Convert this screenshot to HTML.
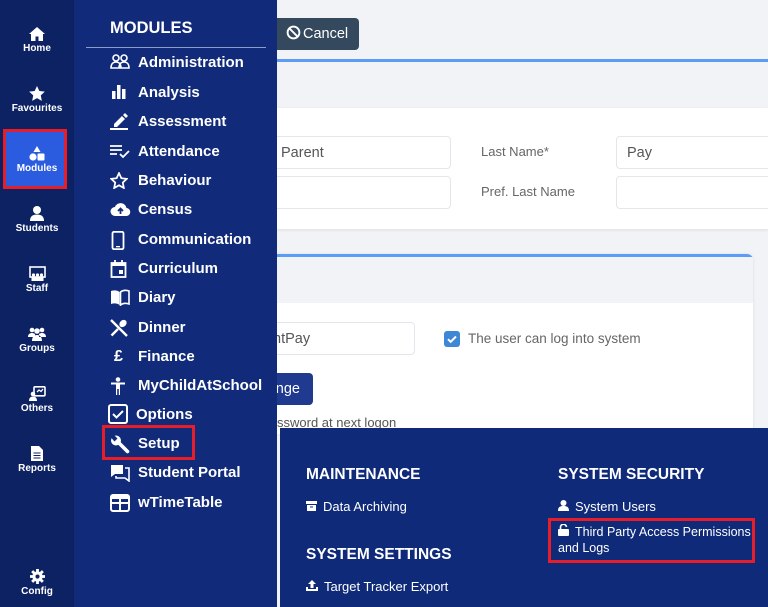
<!DOCTYPE html>
<html><head><meta charset="utf-8"><style>
*{margin:0;padding:0;box-sizing:border-box}
body{width:768px;height:607px;overflow:hidden;position:relative;background:#f1f3f7;font-family:"Liberation Sans",sans-serif}
.a{position:absolute}
.rail{left:0;top:0;width:74px;height:607px;background:#0d2263}
.ri{position:absolute;left:0;width:74px;text-align:center;color:#fff;font-size:10px;font-weight:bold}
.ri svg{display:block;margin:0 auto 2px}
.mod{left:74px;top:0;width:203px;height:607px;background:#112b7a}
.mi{position:absolute;left:64px;color:#fff;font-size:15px;font-weight:bold;height:20px;line-height:20px;white-space:nowrap}
.mi svg{position:absolute;left:-28px;top:1px}
.in{position:absolute;background:#fff;border:1px solid #e3e6ea;border-radius:4px;font-size:14.5px;color:#555;padding-left:10px;line-height:32px}
.lb{position:absolute;font-size:13px;color:#666}
.sub{left:280px;top:428px;width:488px;height:179px;background:#102a7a;color:#fff}
.h{position:absolute;font-size:15.5px;font-weight:bold}
.l{position:absolute;font-size:13px;white-space:nowrap}
</style></head><body>
<div class="a" style="left:277px;top:18px;width:82px;height:32px;background:#34495e;border-radius:0 4px 4px 0;color:#fff;font-size:14.5px;line-height:32px;padding-left:9px"><svg width="15" height="15" viewBox="0 0 16 16" style="vertical-align:-2px;margin-right:2px"><circle cx="8" cy="8" r="6.3" fill="none" stroke="#fff" stroke-width="2"/><path d="M3.7 3.7L12.3 12.3" stroke="#fff" stroke-width="2"/></svg>Cancel</div>
<div class="a" style="left:277px;top:59px;width:491px;height:3px;background:#5b9cf5"></div>
<div class="a" style="left:277px;top:108px;width:491px;height:121px;background:#fff;box-shadow:0 1px 3px #ddd"></div>
<div class="in" style="left:270px;top:136px;width:181px;height:33px">Parent</div>
<div class="in" style="left:270px;top:176px;width:181px;height:33px"></div>
<div class="lb" style="left:481px;top:144px">Last Name*</div>
<div class="lb" style="left:481px;top:184px">Pref. Last Name</div>
<div class="in" style="left:616px;top:136px;width:160px;height:33px">Pay</div>
<div class="in" style="left:616px;top:176px;width:160px;height:33px"></div>
<div class="a" style="left:277px;top:254px;width:476px;height:180px;background:#fff;border-radius:0 6px 0 0;border-top:3px solid #5b9cf5;box-shadow:0 0 3px #ddd"></div>
<div class="a" style="left:277px;top:257px;width:476px;height:46px;background:#f1f3f7"></div>
<div class="in" style="left:262px;top:322px;width:153px;height:33px">ntPay</div>
<div class="a" style="left:444px;top:331px;width:16px;height:16px;background:#3d87d6;border-radius:3px"><svg width="16" height="16" viewBox="0 0 16 16"><path d="M4 8.2l2.7 2.6L12 5.5" fill="none" stroke="#fff" stroke-width="2"/></svg></div>
<div class="lb" style="left:468px;top:331px;font-size:13.5px">The user can log into system</div>
<div class="a" style="left:270px;top:373px;width:43px;height:32px;background:#1f3a8f;border-radius:4px;color:#fff;font-size:14.5px;line-height:32px;text-align:right;padding-right:13px">nge</div>
<div class="lb" style="left:277px;top:415px;color:#555">ssword at next logon</div>

<div class="a rail">
<div class="ri" style="top:27px"><svg width="16" height="14" viewBox="0 0 16 14"><path d="M8 0L0 7h2v7h4.5V9.5h3V14H14V7h2z" fill="#fff"/></svg>Home</div>
<div class="ri" style="top:86px"><svg width="16" height="15" viewBox="0 0 24 23"><path d="M12 0l3.6 7.6 8.4 1-6.2 5.8 1.6 8.4L12 18.6 4.6 22.8l1.6-8.4L0 8.6l8.4-1z" fill="#fff"/></svg>Favourites</div>
<div class="a" style="left:3px;top:129px;width:64px;height:60px;border:3px solid #e61e2a;background:#2b5ce0"></div>
<div class="ri" style="top:146px"><svg width="16" height="15" viewBox="0 0 16 15"><path d="M8 0l3.5 6h-7z" fill="#fff"/><circle cx="4" cy="11" r="3.6" fill="#fff"/><rect x="8.5" y="7.5" width="7" height="7" rx="1" fill="#fff"/></svg>Modules</div>
<div class="ri" style="top:206px"><svg width="14" height="15" viewBox="0 0 14 15"><circle cx="7" cy="4" r="4" fill="#fff"/><path d="M0 15c0-5 3-6.5 7-6.5s7 1.5 7 6.5z" fill="#fff"/></svg>Students</div>
<div class="ri" style="top:266px"><svg width="17" height="15" viewBox="0 0 17 15"><rect x="1" y="1" width="15" height="10" fill="none" stroke="#fff" stroke-width="1.6"/><circle cx="4.5" cy="9" r="1.6" fill="#fff"/><circle cx="8.5" cy="9" r="1.6" fill="#fff"/><circle cx="12.5" cy="9" r="1.6" fill="#fff"/><rect x="2.5" y="11" width="4" height="4" fill="#fff"/><rect x="6.5" y="11" width="4" height="4" fill="#fff"/><rect x="10.5" y="11" width="4" height="4" fill="#fff"/></svg>Staff</div>
<div class="ri" style="top:326px"><svg width="18" height="15" viewBox="0 0 18 15"><circle cx="4" cy="4" r="2.3" fill="#fff"/><circle cx="14" cy="4" r="2.3" fill="#fff"/><circle cx="9" cy="5" r="2.8" fill="#fff"/><path d="M0 11c0-3 2-4 4-4s3 1 3 1v3zM18 11c0-3-2-4-4-4s-3 1-3 1v3zM4 15c0-4 2-6 5-6s5 2 5 6z" fill="#fff"/></svg>Groups</div>
<div class="ri" style="top:386px"><svg width="17" height="15" viewBox="0 0 17 15"><rect x="5" y="0.8" width="11" height="9" rx="1" fill="none" stroke="#fff" stroke-width="1.6"/><path d="M8 6l2-2 2 1.5 2-2.5" stroke="#fff" stroke-width="1.3" fill="none"/><circle cx="4" cy="8" r="2.3" fill="#fff"/><path d="M0 15c0-3 1.5-4.5 4-4.5s4 1.5 4 4.5z" fill="#fff"/></svg>Others</div>
<div class="ri" style="top:446px"><svg width="12" height="15" viewBox="0 0 12 15"><path d="M0 0h8l4 4v11H0z" fill="#fff"/><path d="M2.5 7h7M2.5 9.5h7M2.5 12h7" stroke="#0d2263" stroke-width="1"/></svg>Reports</div>
<div class="ri" style="top:569px"><svg width="15" height="15" viewBox="0 0 16 16"><circle cx="8" cy="8" r="5.5" fill="#fff"/><g stroke="#fff" stroke-width="3"><path d="M8 0v16M0 8h16M2.3 2.3l11.4 11.4M13.7 2.3L2.3 13.7"/></g><circle cx="8" cy="8" r="2.2" fill="#0d2263"/></svg>Config</div>
</div>

<div class="a mod">
<div class="a" style="left:36px;top:19px;color:#fff;font-size:16.5px;font-weight:bold">MODULES</div>
<div class="a" style="left:12px;top:47px;width:180px;height:1px;background:#8a9cc8"></div>
<div class="mi" style="top:53px"><svg width="20" height="16" viewBox="0 0 20 16"><circle cx="6" cy="4" r="3" fill="none" stroke="#fff" stroke-width="1.6"/><circle cx="14" cy="4" r="3" fill="none" stroke="#fff" stroke-width="1.6"/><path d="M1 14c0-4 2-6 5-6s5 2 5 6zM9 14c0-4 2-6 5-6s5 2 5 6z" fill="none" stroke="#fff" stroke-width="1.6"/></svg>Administration</div>
<div class="mi" style="top:83px"><svg width="18" height="16" viewBox="0 0 18 16"><rect x="2" y="7" width="3.5" height="8" fill="#fff"/><rect x="7" y="1" width="3.5" height="14" fill="#fff"/><rect x="12" y="5" width="3.5" height="10" fill="#fff"/></svg>Analysis</div>
<div class="mi" style="top:112px"><svg width="20" height="17" viewBox="0 0 20 17"><path d="M4 11L12 3l3 3-8 8H4z" fill="#fff"/><path d="M13 2l2-2 3 3-2 2z" fill="#fff"/><rect x="0" y="15" width="18" height="2" fill="#fff"/></svg>Assessment</div>
<div class="mi" style="top:142px"><svg width="20" height="16" viewBox="0 0 20 16"><path d="M0 3h12M0 7h12M0 11h7" stroke="#fff" stroke-width="1.8"/><path d="M10 11l3 3 6-6" fill="none" stroke="#fff" stroke-width="1.8"/></svg>Attendance</div>
<div class="mi" style="top:171px"><svg width="18" height="17" viewBox="0 0 24 23"><path d="M12 1.5l3.2 6.9 7.3.9-5.4 5 1.4 7.3L12 18l-6.5 3.6 1.4-7.3-5.4-5 7.3-.9z" fill="none" stroke="#fff" stroke-width="2.4"/></svg>Behaviour</div>
<div class="mi" style="top:200px"><svg width="21" height="16" viewBox="0 0 21 16"><path d="M5 15a4.5 4.5 0 010-9 6 6 0 0111.5 1A4 4 0 0116 15z" fill="#fff"/><path d="M10.5 13V8M8 10l2.5-2.5L13 10" stroke="#112b7a" stroke-width="1.8" fill="none"/></svg>Census</div>
<div class="mi" style="top:230px"><svg width="16" height="19" viewBox="0 0 16 19"><rect x="2.5" y="0.8" width="11" height="17.4" rx="1.6" fill="none" stroke="#fff" stroke-width="1.8"/><rect x="6" y="15" width="4" height="1.3" fill="#fff"/></svg>Communication</div>
<div class="mi" style="top:259px"><svg width="17" height="18" viewBox="0 0 17 18"><rect x="1.5" y="3" width="14" height="14" fill="none" stroke="#fff" stroke-width="1.8"/><rect x="1.5" y="3" width="14" height="3" fill="#fff"/><path d="M5 0v4M12 0v4" stroke="#fff" stroke-width="1.8"/><rect x="9" y="10" width="4" height="4" fill="#fff"/></svg>Curriculum</div>
<div class="mi" style="top:288px"><svg width="20" height="17" viewBox="0 0 20 17"><path d="M1 2c3-1 6-1 8.5 1v13C7 14 4 14 1 15z" fill="#fff"/><path d="M10.5 3c2.5-2 5.5-2 8.5-1v13c-3-1-6-1-8.5 1z" fill="none" stroke="#fff" stroke-width="1.6"/></svg>Diary</div>
<div class="mi" style="top:318px"><svg width="18" height="18" viewBox="0 0 18 18"><path d="M1 1l16 16" stroke="#fff" stroke-width="2.4"/><path d="M8 10L1.5 16.5" stroke="#fff" stroke-width="2.4"/><ellipse cx="13" cy="4.5" rx="3.2" ry="4" transform="rotate(45 13 4.5)" fill="#fff"/></svg>Dinner</div>
<div class="mi" style="top:347px"><span style="position:absolute;left:-24px;font-size:16px">£</span>Finance</div>
<div class="mi" style="top:376px"><svg width="16" height="18" viewBox="0 0 16 18"><circle cx="8" cy="2.5" r="2.3" fill="#fff"/><path d="M1 5.5h14v2H10V18H8.8v-6h-1.6v6H6V7.5H1z" fill="#fff"/></svg>MyChildAtSchool</div>
<div class="mi" style="top:405px;left:62px"><svg width="20" height="20" viewBox="0 0 20 20" style="left:-28px;top:-1px"><rect x="1" y="1" width="18" height="18" rx="2" fill="none" stroke="#fff" stroke-width="2"/><path d="M5 10l3.5 3.5L15 7" fill="none" stroke="#fff" stroke-width="2"/></svg>Options</div>
<div class="a" style="left:28px;top:425px;width:93px;height:35px;border:3px solid #e61e2a"></div>
<div class="mi" style="top:434px"><svg width="20" height="19" viewBox="0 0 20 19"><path d="M9 8l8.5 8.5" stroke="#fff" stroke-width="3.6" stroke-linecap="round"/><circle cx="6" cy="5.5" r="5" fill="#fff"/><path d="M1 2.5L4 0l3.5 3.5-3 3z" fill="#112b7a"/></svg>Setup</div>
<div class="mi" style="top:463px"><svg width="20" height="18" viewBox="0 0 20 18"><path d="M1 1h12v9H5l-4 3z" fill="#fff"/><path d="M15 4h4v13l-4-3H6v-2" fill="none" stroke="#fff" stroke-width="1.6"/></svg>Student Portal</div>
<div class="mi" style="top:493px"><svg width="20" height="18" viewBox="0 0 20 18"><rect x="1" y="1" width="18" height="16" rx="2" fill="none" stroke="#fff" stroke-width="2"/><path d="M1 9h18M10 1v16" stroke="#fff" stroke-width="2"/><rect x="1" y="1" width="18" height="4" fill="#fff"/></svg>wTimeTable</div>
</div>

<div class="a sub">
<div class="h" style="left:26px;top:38px">MAINTENANCE</div>
<div class="l" style="left:26px;top:71px"><svg width="11" height="10" viewBox="0 0 11 10" style="margin-right:6px"><rect x="0" y="0" width="11" height="3" fill="#fff"/><rect x="1" y="4" width="9" height="6" fill="#fff"/><rect x="4" y="5.5" width="3" height="1" fill="#102a7a"/></svg>Data Archiving</div>
<div class="h" style="left:26px;top:118px">SYSTEM SETTINGS</div>
<div class="l" style="left:26px;top:151px"><svg width="12" height="11" viewBox="0 0 12 11" style="margin-right:6px"><path d="M6 0L2 4h2.5v4h3V4H10z" fill="#fff"/><path d="M0 7v4h12V7h-2v2H2V7z" fill="#fff"/></svg>Target Tracker Export</div>
<div class="h" style="left:278px;top:38px">SYSTEM SECURITY</div>
<div class="l" style="left:278px;top:71px"><svg width="11" height="11" viewBox="0 0 11 11" style="margin-right:6px"><circle cx="5.5" cy="3" r="3" fill="#fff"/><path d="M0 11c0-4 2-5 5.5-5s5.5 1 5.5 5z" fill="#fff"/></svg>System Users</div>
<div class="a" style="left:268px;top:90px;width:207px;height:45px;border:3px solid #e61e2a"></div>
<div class="l" style="left:278px;top:96px;line-height:16px;font-size:12.5px"><svg width="11" height="12" viewBox="0 0 11 12" style="margin-right:6px"><path d="M2.5 5V3.5a3 3 0 016-0.5" fill="none" stroke="#fff" stroke-width="1.6"/><rect x="0" y="5" width="11" height="7" rx="1" fill="#fff"/></svg>Third Party Access Permissions<br>and Logs</div>
</div>
</body></html>
